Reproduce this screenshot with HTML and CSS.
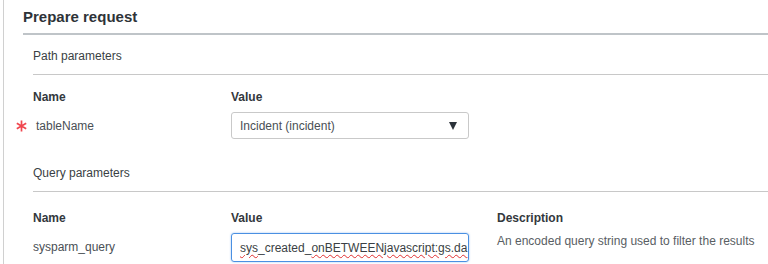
FILE: index.html
```html
<!DOCTYPE html>
<html lang="en">
<head>
    <meta charset="UTF-8">
    <title>Prepare request</title>
    <link rel="stylesheet" href="styles.css">
</head>
<body>
    <div class="panel">
        <h1 class="panel-title">Prepare request</h1>

        <div class="param-section">
            <h2 class="section-title">Path parameters</h2>
            <div class="param-grid">
                <div class="col-head">Name</div>
                <div class="col-head">Value</div>
                <div class="col-head"></div>

                <div class="param-name required">
                    <svg class="asterisk" width="11" height="12" viewBox="0 0 11 12">
                        <path d="M5.5 0.5V11.5M0.8 3.2L10.2 8.8M0.8 8.8L10.2 3.2" stroke="#f0474f" stroke-width="1.7" fill="none"/>
                    </svg>
                    tableName
                </div>
                <div class="param-value">
                    <div class="select-box">
                        <span>Incident (incident)</span>
                        <span class="select-arrow"></span>
                    </div>
                </div>
                <div class="param-desc"></div>
            </div>
        </div>

        <div class="param-section">
            <h2 class="section-title">Query parameters</h2>
            <div class="param-grid">
                <div class="col-head col-head-query">Name</div>
                <div class="col-head col-head-query">Value</div>
                <div class="col-head col-head-query">Description</div>

                <div class="param-name">sysparm_query</div>
                <div class="param-value">
                    <div class="text-input focused"><span class="misspelled">sys</span>_created_<span class="misspelled">onBETWEENjavascript:gs.da</span></div>
                </div>
                <div class="param-desc">An encoded query string used to filter the results</div>
            </div>
        </div>
    </div>
</body>
</html>
```

FILE: styles.css
```css
body {
    margin: 0;
    font-family: "Liberation Sans", Arial, sans-serif;
    font-size: 12px;
    line-height: 14px;
    color: #3a3f44;
    background: #fff;
}
.panel {
    margin-left: 3px;
    border-left: 1px solid #d0d0d0;
    height: 264px;
    padding-left: 19px;
}
.panel-title {
    margin: 0;
    padding-top: 8px;
    height: 25px;
    font-size: 15px;
    line-height: 18px;
    font-weight: bold;
    color: #2e3338;
    border-bottom: 2px solid #bfc4c8;
}
.param-section {
    padding-left: 10px;
}
.section-title {
    margin: 0;
    padding-top: 14px;
    padding-bottom: 11px;
    font-size: 12px;
    font-weight: normal;
    color: #3a3f44;
    border-bottom: 1px solid #c8c8c8;
}
.param-grid {
    display: grid;
    grid-template-columns: 198px 266px 1fr;
    align-items: start;
}
.col-head {
    font-weight: bold;
    color: #33383d;
    padding-top: 15px;
    padding-bottom: 8px;
}
.col-head-query {
    padding-top: 19px;
}
.param-name {
    padding-top: 7px;
    color: #4a4f55;
}
.param-name.required {
    position: relative;
    padding-left: 3px;
}
.asterisk {
    position: absolute;
    left: -17px;
    top: 8px;
}
.param-desc {
    padding-top: 1px;
    color: #595e63;
}
.select-box {
    width: 238px;
    height: 27px;
    margin-bottom: 13px;
    box-sizing: border-box;
    border: 1px solid #c9c9c9;
    border-radius: 3px;
    display: flex;
    align-items: center;
    justify-content: space-between;
    padding: 0 11px 0 8px;
    color: #4a4f55;
}
.select-arrow {
    width: 0;
    height: 0;
    border-left: 4.5px solid transparent;
    border-right: 4.5px solid transparent;
    border-top: 8px solid #2b323a;
    margin-top: 1px;
}
.text-input {
    width: 238px;
    height: 29px;
    box-sizing: border-box;
    border: 1px solid #4a90e2;
    border-radius: 3px;
    box-shadow: 0 0 2px rgba(74, 144, 226, 0.6);
    display: flex;
    align-items: center;
    padding: 0 8px;
    overflow: hidden;
    white-space: pre;
    color: #3a3f44;
}
.misspelled {
    text-decoration: underline wavy #e03030;
    text-decoration-thickness: 1px;
    text-underline-offset: 2px;
}
```
